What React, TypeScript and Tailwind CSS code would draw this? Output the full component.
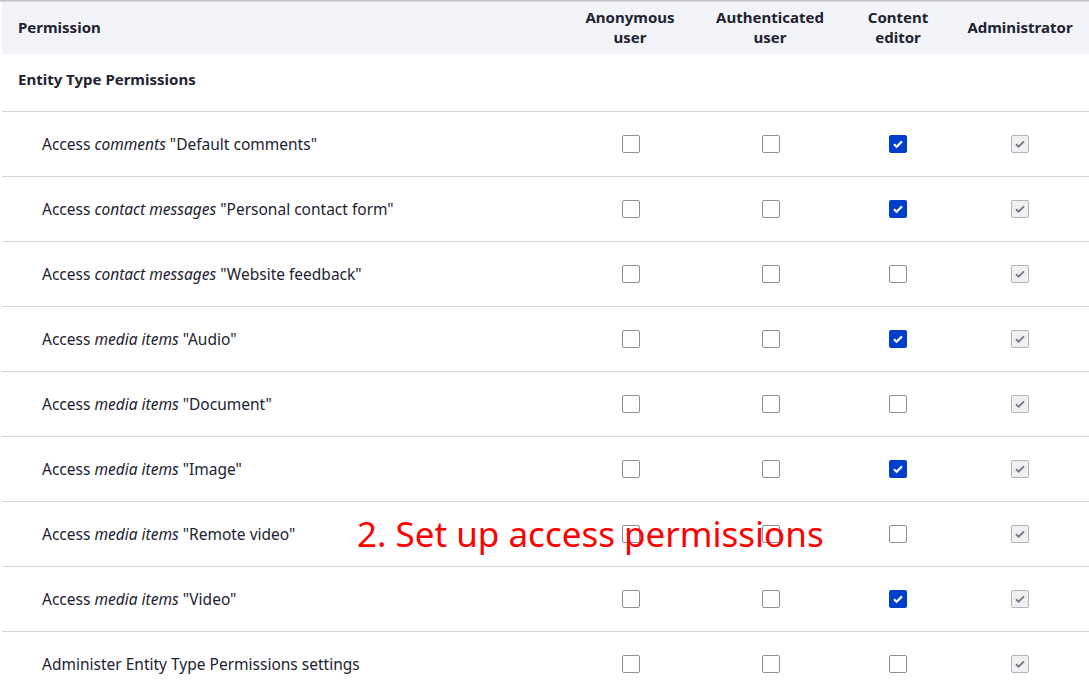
import React from "react";

type Row = { pre: string; em?: string; post?: string; perms: [boolean, boolean, boolean] };

const rows: Row[] = [
  { pre: "Access ", em: "comments", post: ' "Default comments"', perms: [false, false, true] },
  { pre: "Access ", em: "contact messages", post: ' "Personal contact form"', perms: [false, false, true] },
  { pre: "Access ", em: "contact messages", post: ' "Website feedback"', perms: [false, false, false] },
  { pre: "Access ", em: "media items", post: ' "Audio"', perms: [false, false, true] },
  { pre: "Access ", em: "media items", post: ' "Document"', perms: [false, false, false] },
  { pre: "Access ", em: "media items", post: ' "Image"', perms: [false, false, true] },
  { pre: "Access ", em: "media items", post: ' "Remote video"', perms: [false, false, false] },
  { pre: "Access ", em: "media items", post: ' "Video"', perms: [false, false, true] },
  { pre: "Administer Entity Type Permissions settings", perms: [false, false, false] },
];

const grid = "grid grid-cols-[558px_140px_140px_116px_128px]";

function Box({ checked, disabled }: { checked?: boolean; disabled?: boolean }) {
  if (disabled) {
    return (
      <span className="w-[18px] h-[18px] rounded-[2px] border border-[#b4b4b8] bg-[#f0f0f2] flex items-center justify-center">
        <svg width="12" height="12" viewBox="0 0 12 12">
          <path d="M2 6.2l2.6 2.5L10 3.4" fill="none" stroke="#7b7b82" strokeWidth="2" />
        </svg>
      </span>
    );
  }
  if (checked) {
    return (
      <span className="w-[18px] h-[18px] rounded-[2px] bg-[#003ecc] flex items-center justify-center">
        <svg width="12" height="12" viewBox="0 0 12 12">
          <path d="M2 6.2l2.6 2.5L10 3.4" fill="none" stroke="#ffffff" strokeWidth="2.2" />
        </svg>
      </span>
    );
  }
  return <span className="w-[18px] h-[18px] rounded-[2px] border border-[#8e8e94] bg-white" />;
}

export default function App() {
  return (
    <div className="relative w-[1089px] h-[685px] overflow-hidden bg-white text-[#222330] font-['Noto_Sans',sans-serif] text-[15.5px]">
      <div className="h-[2px] bg-gradient-to-b from-[#b8b8bc] to-[#e4e4e8]" />
      <div className="pl-[2px]">
        <div className={`${grid} h-[52px] bg-[#f3f4f9] font-bold text-[15px] leading-[20px] pb-[3px]`}>
          <div className="flex items-center pl-4">Permission</div>
          <div className="flex items-center justify-center text-center">Anonymous<br />user</div>
          <div className="flex items-center justify-center text-center">Authenticated<br />user</div>
          <div className="flex items-center justify-center text-center">Content<br />editor</div>
          <div className="flex items-center justify-center text-center">Administrator</div>
        </div>
        <div className="h-[58px] flex items-center pl-4 pb-[7px] font-bold text-[15px] border-b border-[#d6d6da]">Entity Type Permissions</div>
        {rows.map((r, i) => (
          <div key={i} className={`${grid} h-[65px] border-b border-[#d6d6da]`}>
            <div className="flex items-center pl-10 pt-[2px]">
              <span className="whitespace-pre">
                {r.pre}
                {r.em && <em className="italic">{r.em}</em>}
                {r.post}
              </span>
            </div>
            <div className="flex items-center justify-center pl-[2px]"><Box checked={r.perms[0]} /></div>
            <div className="flex items-center justify-center pl-[2px]"><Box checked={r.perms[1]} /></div>
            <div className="flex items-center justify-center"><Box checked={r.perms[2]} /></div>
            <div className="flex items-center justify-center"><Box disabled /></div>
          </div>
        ))}
      </div>
      <div className="absolute left-[357px] top-[512px] text-[#ff0000] text-[35px] leading-[44px] whitespace-nowrap">
        2. Set up access permissions
      </div>
    </div>
  );
}
